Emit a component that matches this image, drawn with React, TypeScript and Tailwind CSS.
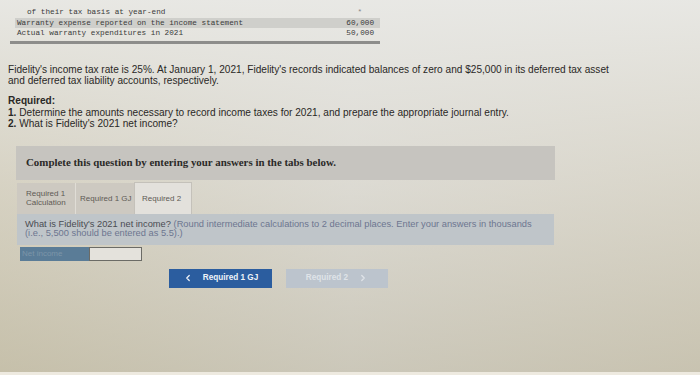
import { ChevronLeft, ChevronRight } from 'lucide-react';

const mono = { fontFamily: '"Liberation Mono", "DejaVu Sans Mono", monospace' };

function WarrantyTable() {
    return (
        <div className="ml-[10px] w-[370px] pt-[7px] text-[7.7px] leading-[10.5px] text-[#3a3a3a]" style={mono}>
            <div className="flex justify-between pl-[17px] pr-[6px]">
                <span>of their tax basis at year-end</span>
                <span className="pr-[12px] text-[#888]">*</span>
            </div>
            <div className="ml-[5px] flex justify-between bg-[#cfcfcb] pl-[2px] pr-[6px]">
                <span>Warranty expense reported on the income statement</span>
                <span>60,000</span>
            </div>
            <div className="ml-[5px] flex justify-between pl-[2px] pr-[6px]">
                <span>Actual warranty expenditures in 2021</span>
                <span>50,000</span>
            </div>
            <div className="mt-[2px] h-[3px] bg-[#8d8d8b]" />
        </div>
    );
}

function Tabs() {
    return (
        <div className="ml-[17px] flex items-end text-[8px] leading-[9px] text-[#5e5a55]">
            <div className="flex h-[31px] w-[58px] flex-col justify-center bg-[#cdc9c1] pl-[9px]">
                <span>Required 1</span>
                <span>Calculation</span>
            </div>
            <div className="flex h-[31px] w-[59px] items-center border-l border-[#e0ddd6] bg-[#cdc9c1] pl-[4px]">
                Required 1 GJ
            </div>
            <div className="flex h-[32px] w-[58px] items-center border border-b-0 border-[#c4c1ba] bg-[#e3e1dc] pl-[7px]">
                Required 2
            </div>
        </div>
    );
}

export default function App() {
    return (
        <div
            className="relative h-[375px] w-[700px] overflow-hidden bg-linear-to-r from-[#cbc3a6] via-[#d9d7cd] to-[#d1cbb6]"
            style={{ fontFamily: '"Liberation Sans", Arial, sans-serif' }}
        >
            <div className="h-full bg-linear-to-b from-[#e9e9e6]/95 via-[#dedcd6]/60 to-[#c2bdac]/60">
                <WarrantyTable />

                {/* Problem text */}
                <div className="ml-[8px] mt-[20px] w-[680px] text-[10.1px] leading-[11px] text-[#2a2826]">
                    <p>
                        Fidelity's income tax rate is 25%. At January 1, 2021, Fidelity's records indicated balances of zero and
                        $25,000 in its deferred tax asset
                        <br />
                        and deferred tax liability accounts, respectively.
                    </p>
                    <p className="mt-[9px] font-bold">Required:</p>
                    <p className="mt-[1px]">
                        <span className="font-bold">1.</span> Determine the amounts necessary to record income taxes for 2021,
                        and prepare the appropriate journal entry.
                    </p>
                    <p>
                        <span className="font-bold">2.</span> What is Fidelity's 2021 net income?
                    </p>
                </div>

                {/* Instruction box */}
                <div
                    className="ml-[16px] mt-[17px] flex h-[34px] w-[539px] items-center bg-[#c6c4bf] pl-[10px] text-[10.9px] font-bold text-[#2b2a28]"
                    style={{ fontFamily: '"Liberation Serif", "Times New Roman", serif' }}
                >
                    Complete this question by entering your answers in the tabs below.
                </div>

                <div className="mt-[2px]">
                    <Tabs />
                </div>

                {/* Tab panel */}
                <div className="ml-[17px] h-[31px] w-[537px] bg-[#bfc5c9] px-[8px] pt-[6px] text-[9.3px] leading-[9.5px] text-[#4a4c52]">
                    <p>
                        What is Fidelity's 2021 net income?{' '}
                        <span className="text-[#6d7690]">
                            (Round intermediate calculations to 2 decimal places. Enter your answers in thousands
                            <br />
                            (i.e., 5,500 should be entered as 5.5).)
                        </span>
                    </p>
                </div>

                {/* Answer row */}
                <div className="ml-[20px] mt-[2px] flex h-[14px] w-[122px] text-[8px]">
                    <div className="flex w-[69px] items-center bg-[#5a7c97] pl-[2px] text-[#7c95a8]">Net income</div>
                    <div className="flex-1 border border-[#6b6b66] bg-[#e4e2dc]" />
                </div>

                {/* Nav buttons */}
                <div className="ml-[169px] mt-[8px] flex gap-[14px] text-[8.2px] font-bold">
                    <div className="flex h-[19px] w-[103px] items-center justify-center gap-[10px] bg-[#2b5d9f] text-[#eef2f8]">
                        <ChevronLeft className="h-[10px] w-[10px]" strokeWidth={3} />
                        <span>Required 1 GJ</span>
                    </div>
                    <div className="flex h-[19px] w-[102px] items-center justify-center gap-[10px] bg-[#bcc4cd] text-[#dfe3e8]">
                        <span>Required 2</span>
                        <ChevronRight className="h-[10px] w-[10px]" strokeWidth={3} />
                    </div>
                </div>
            </div>
            <div className="absolute bottom-0 left-0 h-[3px] w-full bg-[#eeeae0]" />
        </div>
    );
}
